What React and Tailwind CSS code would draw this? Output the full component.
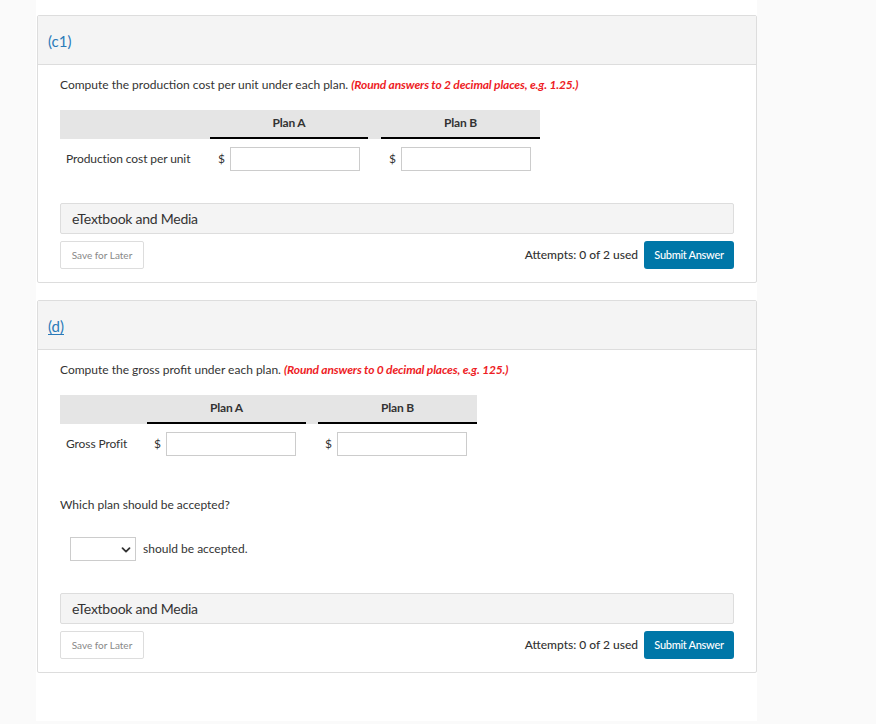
import React from "react";

function Chevron() {
  return (
    <svg width="10" height="10" viewBox="0 0 10 10" className="absolute right-[4px] top-[7px]">
      <path d="M1.5 3.2 L5 6.6 L8.5 3.2" fill="none" stroke="#333" strokeWidth="1.8" strokeLinecap="round" strokeLinejoin="round" />
    </svg>
  );
}

function PlanTable({ label, labelW, aW, bW, gap, dollarPad }) {
  return (
    <div className="w-max">
      <div className="flex bg-[#e5e5e5] h-[29px]">
        <div style={{ width: labelW }} />
        <div style={{ width: aW }} className="flex items-center justify-center pb-[2px] border-b-2 border-black text-[12px] font-bold text-[#333] tracking-[-0.2px]">
          Plan A
        </div>
        <div style={{ width: gap }} />
        <div style={{ width: bW }} className="flex items-center justify-center pb-[2px] border-b-2 border-black text-[12px] font-bold text-[#333] tracking-[-0.2px]">
          Plan B
        </div>
      </div>
      <div className="flex items-center h-[40px]">
        <div style={{ width: labelW }} className="pl-[6px] text-[12px] text-[#333] tracking-[-0.1px]">
          {label}
        </div>
        <div style={{ width: aW, paddingLeft: dollarPad }} className="flex items-center">
          <span className="text-[12px] text-[#333] w-[10px]">$</span>
          <input className="ml-[2px] w-[130px] h-[24px] border border-[#ccc] bg-white outline-none" />
        </div>
        <div style={{ width: gap }} />
        <div style={{ width: bW, paddingLeft: dollarPad }} className="flex items-center">
          <span className="text-[12px] text-[#333] w-[10px]">$</span>
          <input className="ml-[2px] w-[130px] h-[24px] border border-[#ccc] bg-white outline-none" />
        </div>
      </div>
    </div>
  );
}

function Footer() {
  return (
    <>
      <div className="h-[31px] bg-[#f4f4f4] border border-[#ddd] rounded-[2px] flex items-center pl-[11px] text-[14px] text-[#333] tracking-[-0.25px]">
        eTextbook and Media
      </div>
      <div className="mt-[7px] flex items-center justify-between">
        <button className="h-[28px] w-[84px] border border-[#ddd] rounded-[2px] bg-white text-[10px] text-[#888]">
          Save for Later
        </button>
        <div className="flex items-center">
          <span className="text-[12px] font-medium text-[#333] mr-[6px]">Attempts: 0 of 2 used</span>
          <button className="h-[28px] w-[90px] rounded-[3px] bg-[#0077a8] text-white text-[11px] font-medium tracking-[-0.3px]">
            Submit Answer
          </button>
        </div>
      </div>
    </>
  );
}

export default function App() {
  return (
    <div className="min-h-screen bg-[#fafafa]" style={{ fontFamily: "Lato, 'Noto Sans', sans-serif" }}>
      <div className="ml-[36px] w-[721px] bg-white pt-[15px] pb-[48px]">
        {/* Card c1 */}
        <div className="ml-px border border-[#ddd] rounded-[2px]">
          <div className="h-[49px] bg-[#f4f4f4] border-b border-[#ddd] flex items-center pl-[10px] pt-[2px] text-[15px] text-[#2a7ab9]">
            (c1)
          </div>
          <div className="px-[22px] pt-[12px] pb-[13px]">
            <p className="text-[12px] text-[#333] leading-[16px]">
              Compute the production cost per unit under each plan.{" "}
              <span className="text-[#ee1c25] font-bold italic tracking-[-0.15px]">(Round answers to 2 decimal places, e.g. 1.25.)</span>
            </p>
            <div className="mt-[17px]">
              <PlanTable label="Production cost per unit" labelW={150} aW={158} bW={159} gap={13} dollarPad={8} />
            </div>
            <div className="mt-[24px]">
              <Footer />
            </div>
          </div>
        </div>

        {/* Card d */}
        <div className="ml-px mt-[17px] border border-[#ddd] rounded-[2px]">
          <div className="h-[49px] bg-[#f4f4f4] border-b border-[#ddd] flex items-center pl-[10px] pt-[2px] text-[15px] text-[#2a7ab9]">
            <span className="underline underline-offset-2">(d)</span>
          </div>
          <div className="px-[22px] pt-[12px] pb-[13px]">
            <p className="text-[12px] text-[#333] leading-[16px]">
              Compute the gross profit under each plan.{" "}
              <span className="text-[#ee1c25] font-bold italic tracking-[-0.15px]">(Round answers to 0 decimal places, e.g. 125.)</span>
            </p>
            <div className="mt-[17px]">
              <PlanTable label="Gross Profit" labelW={87} aW={159} bW={159} gap={12} dollarPad={7} />
            </div>
            <p className="mt-[33px] text-[12px] text-[#333] leading-[16px]">Which plan should be accepted?</p>
            <div className="mt-[24px] ml-[10px] flex items-center">
              <div className="relative w-[66px] h-[24px] border border-[#ccc] bg-white">
                <Chevron />
              </div>
              <span className="ml-[7px] text-[12px] text-[#333]">should be accepted.</span>
            </div>
            <div className="mt-[32px]">
              <Footer />
            </div>
          </div>
        </div>
      </div>
    </div>
  );
}
